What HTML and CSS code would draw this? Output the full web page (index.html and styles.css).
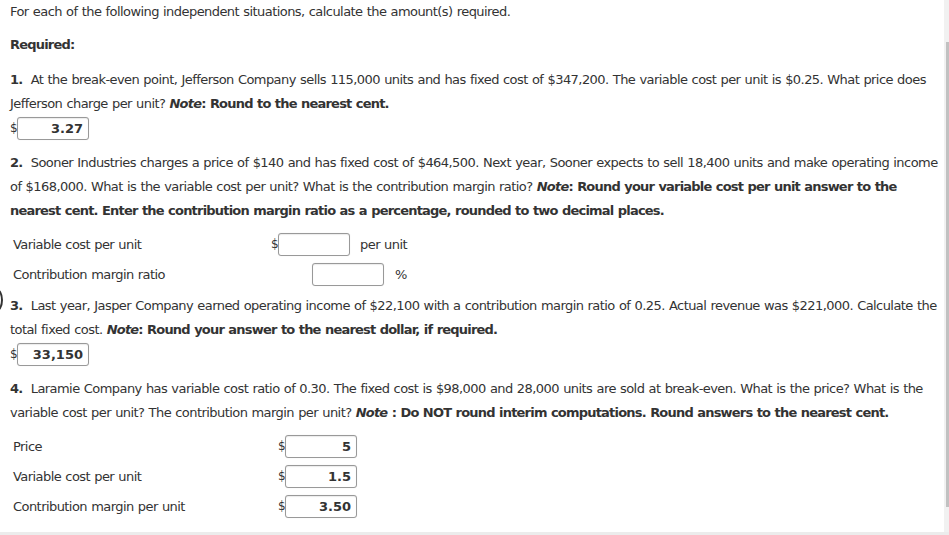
FILE: index.html
```html
<!DOCTYPE html>
<html>
<head>
<meta charset="utf-8">
<link rel="stylesheet" href="styles.css">
</head>
<body>
<div class="frame">
  <main class="content">
    <p class="intro">For each of the following independent situations, calculate the amount(s) required.</p>
    <p class="req"><b>Required:</b></p>

    <section class="q">
      <p class="qtext"><b>1.</b>&nbsp; At the break-even point, Jefferson Company sells 115,000 units and has fixed cost of $347,200. The variable cost per unit is $0.25. What price does Jefferson charge per unit? <b><i>Note</i>: Round to the nearest cent.</b></p>
      <div class="answer"><span class="cur">$</span><span class="box">3.27</span></div>
    </section>

    <section class="q">
      <p class="qtext"><b>2.</b>&nbsp; Sooner Industries charges a price of $140 and has fixed cost of $464,500. Next year, Sooner expects to sell 18,400 units and make operating income of $168,000. What is the variable cost per unit? What is the contribution margin ratio? <b><i>Note</i>: Round your variable cost per unit answer to the nearest cent. Enter the contribution margin ratio as a percentage, rounded to two decimal places.</b></p>
      <div class="rows r2">
        <div class="row">
          <span class="label">Variable cost per unit</span>
          <span class="cur">$</span>
          <span class="box"></span>
          <span class="unit">per unit</span>
        </div>
        <div class="row">
          <span class="label">Contribution margin ratio</span>
          <span class="cur"></span>
          <span class="box shift"></span>
          <span class="unit pct">%</span>
        </div>
      </div>
    </section>

    <section class="q q3">
      <span class="focus-mark"></span>
      <p class="qtext"><b>3.</b>&nbsp; Last year, Jasper Company earned operating income of $22,100 with a contribution margin ratio of 0.25. Actual revenue was $221,000. Calculate the total fixed cost. <b><i>Note</i>: Round your answer to the nearest dollar, if required.</b></p>
      <div class="answer"><span class="cur">$</span><span class="box">33,150</span></div>
    </section>

    <section class="q">
      <p class="qtext"><b>4.</b>&nbsp; Laramie Company has variable cost ratio of 0.30. The fixed cost is $98,000 and 28,000 units are sold at break-even. What is the price? What is the variable cost per unit? The contribution margin per unit? <b><i>Note</i> : Do NOT round interim computations. Round answers to the nearest cent.</b></p>
      <div class="rows r4">
        <div class="row">
          <span class="label">Price</span>
          <span class="cur">$</span>
          <span class="box">5</span>
        </div>
        <div class="row">
          <span class="label">Variable cost per unit</span>
          <span class="cur">$</span>
          <span class="box">1.5</span>
        </div>
        <div class="row">
          <span class="label">Contribution margin per unit</span>
          <span class="cur">$</span>
          <span class="box">3.50</span>
        </div>
      </div>
    </section>
  </main>
  <div class="scrollbar"><div class="thumb"></div></div>
</div>
<div class="bottom-band"></div>
</body>
</html>
```

FILE: styles.css
```css
html, body {
  margin: 0;
  padding: 0;
  background: #fff;
}
body {
  font-family: "DejaVu Sans", Verdana, sans-serif;
  font-size: 13px;
  letter-spacing: -0.56px;
  word-spacing: 0.6px;
  color: #333;
  width: 949px;
  height: 535px;
  overflow: hidden;
}
b { letter-spacing: -0.8px; }
.frame {
  display: flex;
  height: 532px;
}
.content {
  flex: 1;
  padding: 0 3px 0 10px;
  line-height: 24px;
}
p { margin: 0; }
.intro { margin-bottom: 9px; }
.req { margin-bottom: 11px; }
.q {
  position: relative;
  margin-bottom: 11px;
}
.answer {
  display: flex;
  align-items: center;
  margin-top: 1px;
}
.cur {
  font-size: 12px;
  width: 7px;
  line-height: 23px;
  letter-spacing: 0;
}
.box {
  box-sizing: border-box;
  width: 72px;
  height: 23px;
  border: 1px solid #999;
  border-radius: 3px;
  box-shadow: inset 0 1px 1px rgba(0,0,0,0.08), 0 0 1px rgba(0,0,0,0.15);
  text-align: right;
  padding-right: 5px;
  font-weight: bold;
  line-height: 21px;
  background: #fff;
  letter-spacing: 0;
}
.rows {
  display: flex;
  flex-direction: column;
  gap: 7px;
  padding-left: 3px;
  margin-top: 10px;
}
.r2 { margin-bottom: -3px; }
.row {
  display: flex;
  align-items: center;
  height: 23px;
}
.r2 .label { width: 258px; }
.r4 .label { width: 265px; }
.label { line-height: 23px; }
.unit { padding-left: 10px; line-height: 23px; }
.shift { margin-left: 34px; }
.pct { padding-left: 11px; }
.focus-mark {
  position: absolute;
  left: -21px;
  top: -6px;
  width: 14px;
  height: 24px;
  border: 2px solid #333;
  border-radius: 50%;
  box-sizing: border-box;
}
.scrollbar {
  width: 5px;
  background: #f1f1f1;
  position: relative;
}
.thumb {
  position: absolute;
  right: 0;
  top: 42px;
  width: 3px;
  height: 465px;
  background: #c1c1c1;
}
.bottom-band {
  height: 3px;
  background: #ececec;
}
```
